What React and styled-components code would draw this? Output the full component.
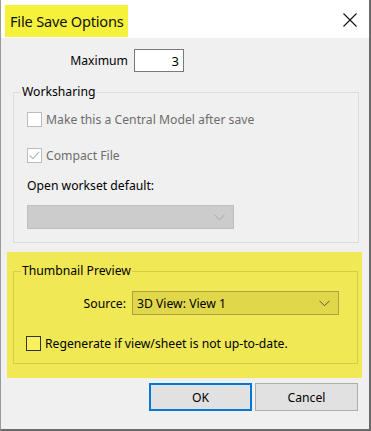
import React from 'react';
import styled, { createGlobalStyle } from 'styled-components';

const GlobalStyle = createGlobalStyle`
  html, body {
    margin: 0;
    padding: 0;
    background: #5a5a5a;
  }
  body {
    font-family: "Noto Sans", "Open Sans", Arial, sans-serif;
    font-size: 12.2px;
    color: #000;
  }
`;

const Window = styled.div`
  width: 368px;
  height: 429px;
  background: #f0f0f0;
  border-left: 1px solid #9a9a9a;
  border-right: 2px solid #6a6a6a;
  border-bottom: 2px solid #6a6a6a;
  display: flex;
  flex-direction: column;
`;

const TitleBar = styled.div`
  height: 38px;
  background: #fff;
  display: flex;
  align-items: flex-start;
  justify-content: space-between;
  padding: 5px 0 0 4px;
  box-sizing: border-box;
`;

const TitleMark = styled.div`
  background: #f6f23c;
  height: 32px;
  width: 123px;
  display: flex;
  align-items: center;
  padding-left: 5px;
  box-sizing: border-box;
  font-size: 14.6px;
  letter-spacing: -0.2px;
  color: #111;
`;

const CloseButton = styled.div`
  width: 38px;
  height: 28px;
  display: flex;
  align-items: center;
  justify-content: center;
  margin-top: 1px;
`;

const Body = styled.div`
  display: flex;
  flex-direction: column;
`;

const MaxRow = styled.div`
  display: flex;
  align-items: center;
  margin-top: 11px;
  height: 23px;
`;

const RightLabel = styled.span`
  width: ${({ $w }) => $w}px;
  text-align: right;
  margin-right: 6px;
  white-space: nowrap;
`;

const NumberBox = styled.div`
  width: 50px;
  height: 23px;
  box-sizing: border-box;
  border: 1px solid #7a7a7a;
  background: #fff;
  display: flex;
  align-items: center;
  justify-content: flex-end;
  padding-right: 4px;
  font-size: 13px;
`;

const Group = styled.fieldset`
  margin: ${({ $top }) => $top}px 0 0 ${({ $left }) => $left}px;
  width: ${({ $w }) => $w}px;
  box-sizing: border-box;
  border: 1px solid ${({ $line }) => $line};
  padding: 0 0 ${({ $pb }) => $pb}px 0;
  min-width: 0;
`;

const Legend = styled.legend`
  margin-left: 7px;
  padding: 0 1px;
  line-height: 16px;
  height: 16px;
`;

const CheckRow = styled.div`
  display: flex;
  align-items: center;
  gap: 4px;
  height: 16px;
  margin: ${({ $top }) => $top}px 0 0 ${({ $left }) => $left}px;
  color: ${({ $disabled }) => ($disabled ? '#6d6d6d' : '#000')};
`;

const Box = styled.div`
  width: 15px;
  height: 15px;
  box-sizing: border-box;
  border: 1px solid ${({ $border }) => $border};
  background: ${({ $fill }) => $fill};
  display: flex;
  align-items: center;
  justify-content: center;
`;

const PlainText = styled.div`
  margin: ${({ $top }) => $top}px 0 0 13px;
  line-height: 16px;
  height: 16px;
`;

const Combo = styled.div`
  width: ${({ $w }) => $w}px;
  height: 24px;
  box-sizing: border-box;
  border: 1px solid ${({ $border }) => $border};
  background: ${({ $bg }) => $bg};
  display: flex;
  align-items: center;
  justify-content: space-between;
  padding: 0 8px 0 4px;
  margin: ${({ $top }) => $top || 0}px 0 0 ${({ $left }) => $left || 0}px;
`;

const Highlight = styled.div`
  margin: 9px 0 0 6px;
  width: 355px;
  background: #f1e855;
  padding: 11px 0 14px 6px;
  box-sizing: border-box;
`;

const SourceRow = styled.div`
  display: flex;
  align-items: center;
  margin-top: 12px;
`;

const ButtonRow = styled.div`
  display: flex;
  justify-content: flex-end;
  gap: 3px;
  margin: 5px 11px 0 0;
`;

const Button = styled.div`
  width: 103px;
  height: 28px;
  box-sizing: border-box;
  background: #e1e1e1;
  border: ${({ $primary }) => ($primary ? '2px solid #0078d7' : '1px solid #adadad')};
  display: flex;
  align-items: center;
  justify-content: center;
`;

const Chevron = ({ color }) => (
  <svg width="11" height="7" viewBox="0 0 11 7">
    <path d="M0.5 0.8 L5.5 5.8 L10.5 0.8" fill="none" stroke={color} strokeWidth="1" />
  </svg>
);

export default function App() {
  return (
    <>
      <GlobalStyle />
      <Window>
        <TitleBar>
          <TitleMark>File Save Options</TitleMark>
          <CloseButton>
            <svg width="14" height="14" viewBox="0 0 14 14">
              <path d="M0.5 0.5 L13.5 13.5 M13.5 0.5 L0.5 13.5" stroke="#111" strokeWidth="1.1" />
            </svg>
          </CloseButton>
        </TitleBar>
        <Body>
          <MaxRow>
            <RightLabel $w={127}>Maximum</RightLabel>
            <NumberBox>3</NumberBox>
          </MaxRow>

          <Group $top={12} $left={12} $w={346} $line="#dcdcdc" $pb={13}>
            <Legend>Worksharing</Legend>
            <CheckRow $top={11} $left={13} $disabled>
              <Box $border="#bcbcbc" $fill="#fff" />
              Make this a Central Model after save
            </CheckRow>
            <CheckRow $top={20} $left={13} $disabled>
              <Box $border="#bcbcbc" $fill="#fff">
                <svg width="11" height="9" viewBox="0 0 11 9">
                  <path d="M0.8 4.5 L4 7.6 L10.2 0.8" fill="none" stroke="#b9b9b9" strokeWidth="1.2" />
                </svg>
              </Box>
              Compact File
            </CheckRow>
            <PlainText $top={15}>Open workset default:</PlainText>
            <Combo $w={207} $top={11} $left={13} $border="#bfbfbf" $bg="#cccccc">
              <span />
              <Chevron color="#a8a8a8" />
            </Combo>
          </Group>

          <Highlight>
            <Group $top={0} $left={0} $w={345} $line="#d5cc4a" $pb={12}>
              <Legend>Thumbnail Preview</Legend>
              <SourceRow>
                <RightLabel $w={112}>Source:</RightLabel>
                <Combo $w={207} $border="#aaa23c" $bg="#e0d74b">
                  <span>3D View: View 1</span>
                  <Chevron color="#555" />
                </Combo>
              </SourceRow>
              <CheckRow $top={20} $left={12}>
                <Box $border="#333" $fill="#f8f05c" />
                Regenerate if view/sheet is not up-to-date.
              </CheckRow>
            </Group>
          </Highlight>

          <ButtonRow>
            <Button $primary>OK</Button>
            <Button>Cancel</Button>
          </ButtonRow>
        </Body>
      </Window>
    </>
  );
}
